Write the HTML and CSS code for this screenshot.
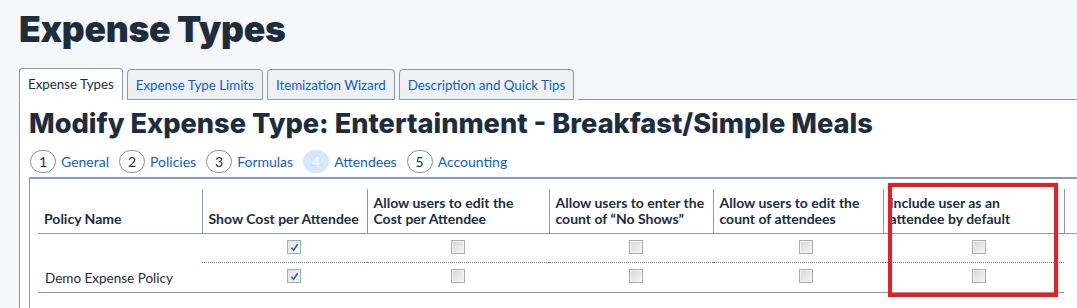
FILE: index.html
```html
<!DOCTYPE html>
<html lang="en">
<head>
    <meta charset="UTF-8">
    <title>Expense Types</title>
    <link rel="stylesheet" href="styles.css">
</head>
<body>

<div class="page">
    <h1 class="page-title">Expense Types</h1>

    <div class="tabs">
        <div class="tab active">Expense Types</div>
        <div class="tab">Expense Type Limits</div>
        <div class="tab">Itemization Wizard</div>
        <div class="tab">Description and Quick Tips</div>
        <div class="tab-rest"></div>
    </div>

    <div class="panel">
        <h2 class="form-title">Modify Expense Type: Entertainment - Breakfast/Simple Meals</h2>

        <div class="steps">
            <div class="step"><span class="step-num">1</span>General</div>
            <div class="step"><span class="step-num">2</span>Policies</div>
            <div class="step"><span class="step-num">3</span>Formulas</div>
            <div class="step current"><span class="step-num">4</span>Attendees</div>
            <div class="step"><span class="step-num">5</span>Accounting</div>
        </div>

        <div class="grid-box">
            <table class="grid">
                <colgroup>
                    <col style="width:164px">
                    <col style="width:165px">
                    <col style="width:182px">
                    <col style="width:164px">
                    <col style="width:170px">
                    <col style="width:181px">
                    <col style="width:120px">
                </colgroup>
                <thead>
                    <tr>
                        <th>Policy Name</th>
                        <th>Show Cost per Attendee</th>
                        <th>Allow users to edit the Cost per Attendee</th>
                        <th>Allow users to enter the count of &ldquo;No Shows&rdquo;</th>
                        <th>Allow users to edit the count of attendees</th>
                        <th>Include user as an attendee by default</th>
                        <th></th>
                    </tr>
                </thead>
                <tbody id="rows"></tbody>
            </table>
        </div>
    </div>
</div>

<div class="callout"></div>

<script>
    const policies = [
        { name: "", flags: [true, false, false, false, false] },
        { name: "Demo Expense Policy", flags: [true, false, false, false, false] }
    ];

    const tick = '<svg width="9" height="9" viewBox="0 0 9 9"><path d="M1.5 4.8 L3.6 7.2 L7.6 1.2" fill="none" stroke="#3c5a99" stroke-width="1.7"/></svg>';

    const body = document.getElementById("rows");
    policies.forEach(p => {
        const tr = document.createElement("tr");
        let html = `<td class="name">${p.name}</td>`;
        p.flags.forEach(f => {
            html += `<td class="check"><span class="box${f ? " on" : ""}">${f ? tick : ""}</span></td>`;
        });
        html += `<td></td>`;
        tr.innerHTML = html;
        body.appendChild(tr);
    });
</script>

</body>
</html>
```

FILE: styles.css
```css
body {
    margin: 0;
    background-color: #f5f6f7;
    font-family: Lato, "Liberation Sans", sans-serif;
    color: #1d2d3e;
    overflow: hidden;
}

.page {
    padding-left: 19px;
}

.page-title {
    margin: 0;
    height: 68px;
    padding-top: 9px;
    box-sizing: border-box;
    font-family: Inter, Lato, sans-serif;
    font-size: 35.5px;
    font-weight: 900;
    line-height: 42px;
    letter-spacing: -0.3px;
}

.tabs {
    display: flex;
    align-items: flex-end;
    gap: 4px;
    height: 32px;
}

.tab {
    height: 31px;
    padding: 0 8px;
    border: 1px solid #8d9aab;
    border-radius: 4px 4px 0 0;
    background-color: #eef0f3;
    color: #0b5fd6;
    font-size: 13.3px;
    line-height: 30px;
    box-sizing: border-box;
}

.tab.active {
    height: 32px;
    background-color: white;
    color: #1d2d3e;
    border-bottom: 1px solid white;
}

.tab-rest {
    flex: 1;
    border-bottom: 1px solid #8d9aab;
}

.panel {
    background-color: white;
    border-left: 1px solid #8d9aab;
    padding: 8px 0 0 9px;
    height: 208px;
    box-sizing: border-box;
    overflow: hidden;
}

.form-title {
    margin: 0;
    font-family: Inter, Lato, sans-serif;
    font-size: 27.2px;
    font-weight: 800;
    line-height: 31px;
    white-space: nowrap;
}

.steps {
    display: flex;
    gap: 10px;
    margin-top: 11px;
    padding-left: 1px;
    height: 27px;
}

.step {
    display: flex;
    align-items: center;
    gap: 5px;
    height: 23px;
    color: #0b5fd6;
    font-size: 14px;
}

.step-num {
    width: 24px;
    height: 21px;
    border: 1px solid #8a9099;
    border-radius: 12px;
    color: #1d2d3e;
    font-size: 14px;
    text-align: center;
    line-height: 21px;
}

.step.current .step-num {
    border-color: #d4e7fb;
    background-color: #d4e7fb;
    color: white;
}

.grid-box {
    border-top: 2px solid #8d9aab;
    border-left: 1px solid #8d9aab;
    padding: 10px 0 0 8px;
    height: 130px;
    overflow: hidden;
}

.grid {
    border-collapse: collapse;
    table-layout: fixed;
    width: 1146px;
}

.grid th {
    height: 44px;
    padding: 0 6px 6px 6px;
    box-sizing: border-box;
    border-left: 1px solid #8d9aab;
    border-bottom: 1px solid #8d9aab;
    text-align: left;
    vertical-align: bottom;
    font-size: 14px;
    font-weight: 700;
    line-height: 16px;
}

.grid th:first-child {
    border-left: none;
}

.grid td {
    height: 29px;
    box-sizing: border-box;
    padding: 0;
    border-bottom: 1px dotted #6f7f92;
    font-size: 13.5px;
}

.grid tr:last-child td {
    border-bottom: 1px solid #8d9aab;
    height: 30px;
}

.grid td:last-child {
    border-bottom: none !important;
}

.grid td.name {
    padding: 2px 0 0 7px;
    vertical-align: middle;
}

.grid tr:first-child td.name {
    border-bottom-color: transparent;
}

.grid td.check {
    text-align: center;
    vertical-align: top;
    padding-top: 6px;
}

.grid td.check:nth-child(2) {
    padding-left: 18px;
}

.grid td.check:nth-child(4) {
    padding-left: 10px;
}

.grid td.check:nth-child(5) {
    padding-left: 16px;
}

.grid td.check:nth-child(6) {
    padding-left: 10px;
}

.box {
    display: inline-block;
    width: 14px;
    height: 14px;
    box-sizing: border-box;
    border: 1px solid #acacac;
    background: linear-gradient(135deg, #d6d6d6, #f6f6f6);
    box-shadow: inset 0 0 0 1px #f2f2f2;
    vertical-align: top;
}

.box.on {
    border-color: #8fbf8f;
    background: linear-gradient(135deg, #dfe3ea, #f8f9fb);
    box-shadow: none;
}

.box svg {
    display: block;
    margin: 2px 0 0 2px;
}

.callout {
    position: absolute;
    left: 888px;
    top: 183px;
    width: 170px;
    height: 114px;
    box-sizing: border-box;
    border: 4px solid #ec1c24;
}
```
